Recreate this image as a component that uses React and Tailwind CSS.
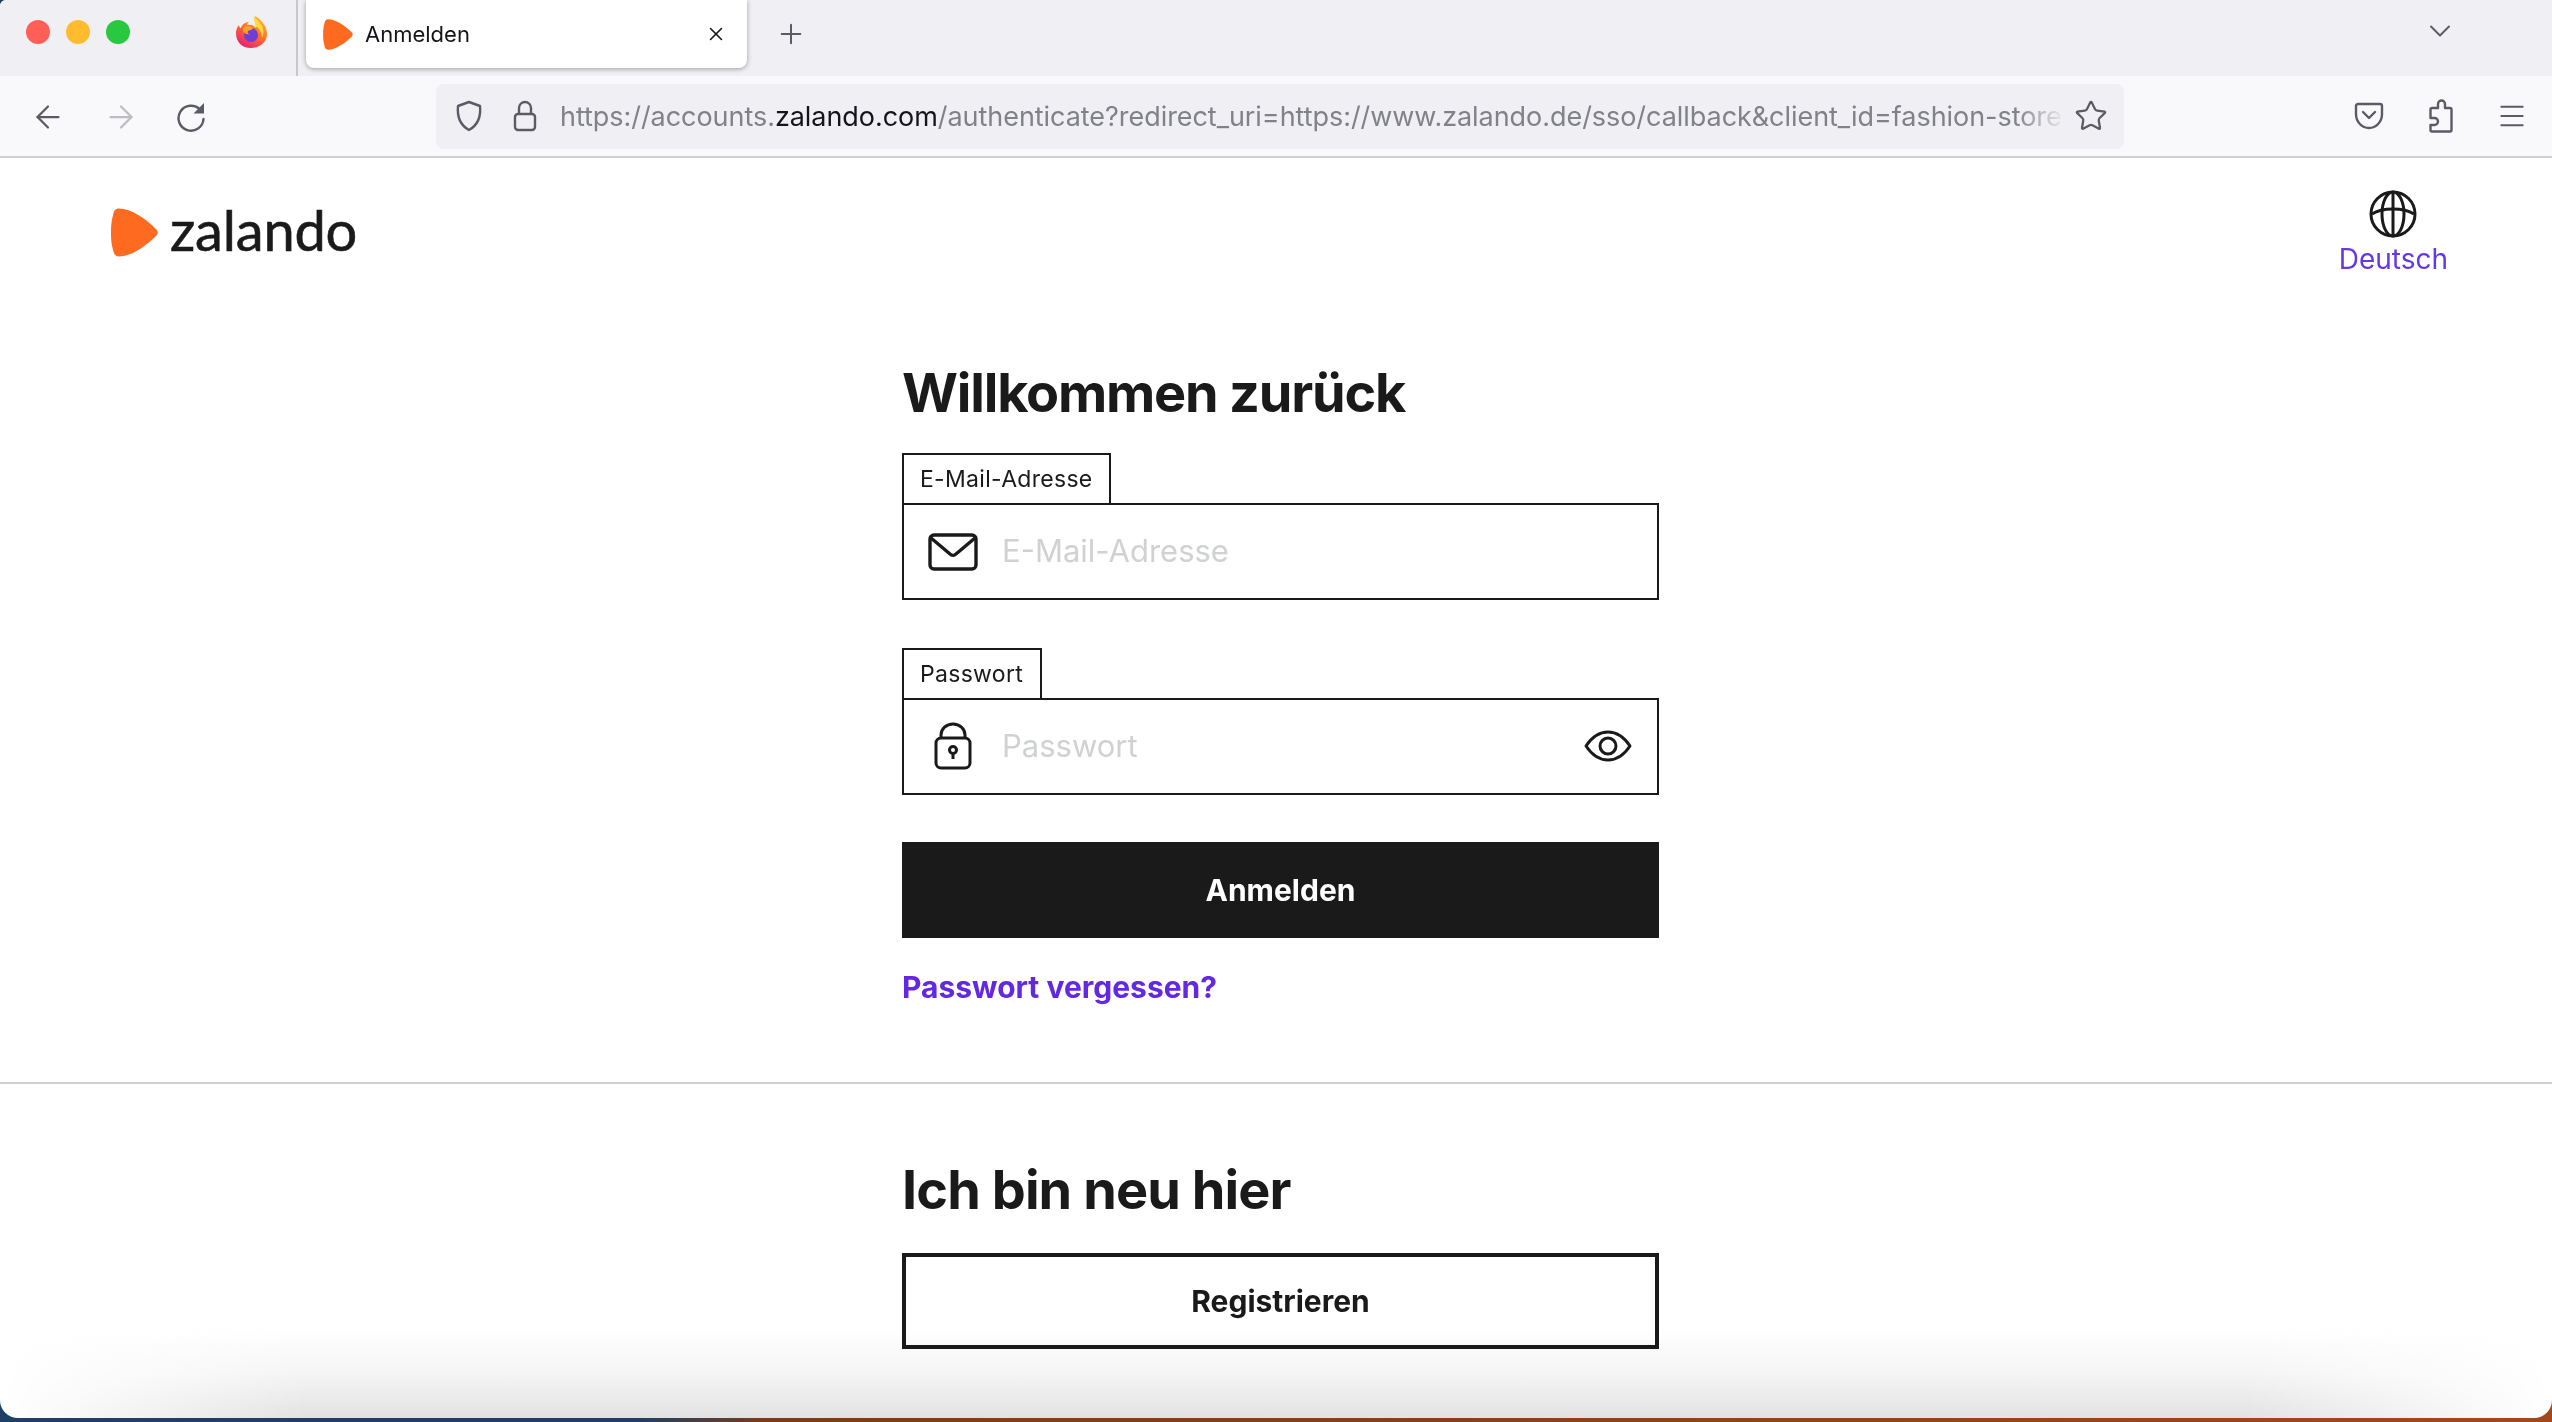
import { Plus, X, ChevronDown, ArrowLeft, ArrowRight, Star, Menu } from 'lucide-react';

const URL_HOST_BEFORE = 'https://accounts.';
const URL_HOST = 'zalando.com';
const URL_REST = '/authenticate?redirect_uri=https://www.zalando.de/sso/callback&client_id=fashion-store';

const ZalandoMark = ({ className }) => (
  <svg className={className} viewBox="0 0 47 49" fill="#ff6a21">
    <path d="M8 .5C20 .5 35 11 45 21c2.400 2.400 2.400 4.600 0 7C35 38 20 48.500 8 48.500c-3.500 0-5-2-5.800-6C.2 36 0 30 0 24.500S.2 13 2.200 6.500C3 2.500 4.500.5 8 .5z" />
  </svg>
);

const FirefoxIcon = () => (
  <svg className="w-[32px] h-[34px]" viewBox="0 0 32 34">
    <defs>
      <linearGradient id="ffBody" x1="0.8" y1="0" x2="0.2" y2="1">
        <stop offset="0" stopColor="#ffbd2e" />
        <stop offset="0.5" stopColor="#ff6a2b" />
        <stop offset="1" stopColor="#e5197d" />
      </linearGradient>
    </defs>
    <path d="M16 33C7 33 1 27 1 18c0-3 1-6 3-8 0 2 1 3 2 3 1-4 5-6 8-6-1 1-2 2-2 3 3-1 7 0 9 3 0-4-1-8-1-12 5 3 12 9 12 18 0 8-7 14-16 14z" fill="url(#ffBody)" />
    <path d="M18 1c4 3 9 8 10 13 1 3 0 6-1 9 0-6-3-10-7-12 0-3-1-7-2-10z" fill="#ffdc3e" />
    <circle cx="16" cy="20" r="7" fill="#6e3fd1" />
    <path d="M9 12c3-2 7-1 9 2l-5 2c-1 2 0 3 2 3-3 1-6-1-7-3 0-1 0-3 1-4z" fill="#ffa02b" />
  </svg>
);

const ReloadIcon = () => (
  <svg className="w-[30px] h-[32px]" viewBox="0 0 30 32" fill="none">
    <path d="M24 8.500A12.500 12.500 0 1 0 27.500 18" stroke="#5b5b66" strokeWidth="2.400" strokeLinecap="round" />
    <path d="M28 2v10.500H17.500z" fill="#5b5b66" />
  </svg>
);

const ChromeShield = () => (
  <svg className="w-[30px] h-[32px]" viewBox="0 0 30 32" fill="none" stroke="#5b5b66" strokeWidth="2.400" strokeLinejoin="round">
    <path d="M15 2 4 6c-1 10 2 19 11 24 9-5 12-14 11-24z" />
  </svg>
);

const ChromeLock = () => (
  <svg className="w-[26px] h-[32px]" viewBox="0 0 26 32" fill="none" stroke="#5b5b66" strokeWidth="2.400">
    <rect x="3" y="14" width="20" height="16" rx="3" />
    <path d="M7 14V8a6 6 0 0 1 12 0v6" />
  </svg>
);

const PocketIcon = () => (
  <svg className="w-[30px] h-[28px]" viewBox="0 0 30 28" fill="none" stroke="#5b5b66" strokeWidth="2.400" strokeLinejoin="round" strokeLinecap="round">
    <path d="M4 2h22a2 2 0 0 1 2 2v8c0 8-6 14-13 14S2 20 2 12V4a2 2 0 0 1 2-2z" />
    <path d="m9 10 6 6 6-6" />
  </svg>
);

const PuzzleIcon = () => (
  <svg className="w-[28px] h-[34px]" viewBox="0 0 28 34" fill="none" stroke="#5b5b66" strokeWidth="2.400" strokeLinejoin="round">
    <path d="M12 9V5a3.500 3.500 0 0 1 7 0v4h5a1.500 1.500 0 0 1 1.500 1.500V31a1.500 1.500 0 0 1-1.500 1.500H6A1.500 1.500 0 0 1 4.500 31v-5h4a3.500 3.500 0 0 0 0-7h-4v-8.500A1.500 1.500 0 0 1 6 9z" />
  </svg>
);

const MailIcon = () => (
  <svg className="w-[50px] h-[38px]" viewBox="0 0 50 38" fill="none" stroke="#1a1a1a" strokeWidth="3.400" strokeLinejoin="round" strokeLinecap="round">
    <rect x="2" y="2" width="46" height="34" rx="4" />
    <path d="m3 5 19 16a4 4 0 0 0 6 0L47 5" />
  </svg>
);

const PadlockIcon = () => (
  <svg className="w-[38px] h-[48px] -mt-[2px]" viewBox="0 0 38 48" fill="none" stroke="#1a1a1a" strokeWidth="3" strokeLinejoin="round">
    <rect x="2" y="16" width="34" height="30" rx="5" />
    <path d="M7 16v-3a12 11 0 0 1 24 0v3" />
    <circle cx="19" cy="28" r="3.500" />
    <path d="M19 31v6" />
  </svg>
);

const EyeIcon = () => (
  <svg className="w-[48px] h-[32px] mr-[25px] -mt-[2px] shrink-0" viewBox="0 0 48 32" fill="none" stroke="#1a1a1a" strokeWidth="3">
    <path d="M2 16C8 7 16 2 24 2s16 5 22 14c-6 9-14 14-22 14S8 25 2 16z" strokeLinejoin="round" />
    <circle cx="24" cy="16" r="8" />
  </svg>
);

const GlobeIcon = () => (
  <svg className="w-[48px] h-[48px]" viewBox="0 0 48 48" fill="none" stroke="#1a1a1a" strokeWidth="3">
    <circle cx="24" cy="24" r="22" />
    <ellipse cx="24" cy="24" rx="11" ry="22" />
    <path d="M24 2v44" />
    <path d="M3 24c6-4 14-5 21-5s15 1 21 5" />
  </svg>
);

const FieldTab = ({ label, width }) => (
  <div className={`${width} h-[52px] -mb-[2px] border-2 border-[#1a1a1a] flex items-center pl-[16px] text-[23px] tracking-[0.3px] text-[#1a1a1a]`}>
    {label}
  </div>
);

const LoginField = ({ label, tabWidth, icon, trailing }) => (
  <div>
    <FieldTab label={label} width={tabWidth} />
    <div className="h-[97px] border-2 border-[#1a1a1a] flex items-center">
      <div className="w-[98px] flex justify-center shrink-0">{icon}</div>
      <input
        placeholder={label}
        className="flex-1 min-w-0 outline-none text-[31px] text-[#1a1a1a] placeholder:text-[#d0d1d3]"
      />
      {trailing}
    </div>
  </div>
);

export default function App() {
  return (
    <div className="h-screen overflow-hidden bg-[linear-gradient(to_right,#1e3f66_0%,#1e3f66_25%,#7a3c18_30%,#a2481c_100%)] font-['Inter',sans-serif]">
      <div className="relative h-[1418px] flex flex-col overflow-hidden rounded-b-[18px] rounded-tl-[6px] bg-white">
        {/* Tab strip */}
        <div className="h-[76px] shrink-0 bg-[#f0f0f4] flex">
          <div className="w-[298px] shrink-0 flex items-start border-r-2 border-[#c8c8cc]">
            <div className="flex gap-[16px] pl-[26px] pt-[20px]">
              <span className="w-[24px] h-[24px] rounded-full bg-[#ff5f57]" />
              <span className="w-[24px] h-[24px] rounded-full bg-[#febc2e]" />
              <span className="w-[24px] h-[24px] rounded-full bg-[#28c840]" />
            </div>
            <div className="ml-[105px] pt-[15px]">
              <FirefoxIcon />
            </div>
          </div>
          <div className="ml-[8px] w-[441px] h-[68px] bg-white rounded-b-[8px] shadow-[0_1px_5px_rgba(0,0,0,0.35)] flex items-center pl-[17px] pr-[20px]">
            <ZalandoMark className="w-[30px] h-[31px] shrink-0" />
            <span className="ml-[12px] flex-1 text-[22px] text-[#15141a]">Anmelden</span>
            <X className="w-[22px] h-[22px] text-[#15141a]" strokeWidth={1.7} />
          </div>
          <div className="ml-[28px] h-[68px] flex items-center">
            <Plus className="w-[32px] h-[32px] text-[#5b5b66]" strokeWidth={1.500} />
          </div>
          <div className="ml-auto mr-[94px] h-[62px] flex items-center">
            <ChevronDown className="w-[36px] h-[36px] text-[#5b5b66]" strokeWidth={1.300} />
          </div>
        </div>

        {/* Toolbar */}
        <div className="h-[82px] shrink-0 bg-[#f9f9fb] border-b-2 border-[#cfcfd1] flex items-center">
          <div className="w-[436px] shrink-0 flex items-center pl-[30px] gap-[37px] pt-[2px]">
            <ArrowLeft className="w-[36px] h-[36px] text-[#5b5b66]" strokeWidth={1.500} />
            <ArrowRight className="w-[36px] h-[36px] text-[#bcbcc2]" strokeWidth={1.500} />
            <ReloadIcon />
          </div>
          <div className="w-[1688px] h-[65px] rounded-[8px] bg-[#f0f0f4] flex items-center pl-[18px] pr-[16px]">
            <ChromeShield />
            <div className="ml-[28px]"><ChromeLock /></div>
            <div className="ml-[22px] pt-[3px] flex-1 min-w-0 overflow-hidden whitespace-nowrap text-[27px] tracking-[-0.05px] text-[#81818a] [mask-image:linear-gradient(to_left,transparent_6px,black_56px)]">
              {URL_HOST_BEFORE}<span className="text-[#15141a]">{URL_HOST}</span>{URL_REST}
            </div>
            <Star className="ml-[2px] w-[34px] h-[34px] shrink-0 text-[#5b5b66]" strokeWidth={1.600} />
          </div>
          <div className="flex-1 flex items-center justify-end pr-[24px] gap-[42px]">
            <PocketIcon />
            <PuzzleIcon />
            <Menu className="w-[32px] h-[32px] text-[#5b5b66]" strokeWidth={1.500} />
          </div>
        </div>

        {/* Header */}
        <div className="h-[116px] shrink-0 flex items-start justify-between pl-[111px] pr-[104px]">
          <div className="flex items-center gap-[12px] pt-[50px]">
            <ZalandoMark className="w-[47px] h-[49px]" />
            <span className="-mt-[6px] text-[56px] leading-[49px] tracking-[-0.200px] text-[#1a1a1a] [-webkit-text-stroke:0.6px_#1a1a1a] font-['Lato',sans-serif]">zalando</span>
          </div>
          <div className="flex flex-col items-center pt-[32px]">
            <GlobeIcon />
            <span className="mt-[3px] text-[28px] leading-[36px] text-[#6638e4]">Deutsch</span>
          </div>
        </div>

        {/* Login */}
        <div className="w-[757px] ml-[902px] shrink-0 pt-[85px]">
          <h1 className="text-[54px] leading-[68px] font-bold tracking-[-1.200px] text-[#1a1a1a]">Willkommen zurück</h1>
          <div className="mt-[26px] flex flex-col gap-[48px]">
            <LoginField label="E-Mail-Adresse" tabWidth="w-[209px]" icon={<MailIcon />} />
            <LoginField label="Passwort" tabWidth="w-[140px]" icon={<PadlockIcon />} trailing={<EyeIcon />} />
          </div>
          <button type="button" className="mt-[47px] w-full h-[96px] bg-[#1a1a1a] text-white text-[30px] font-bold">
            Anmelden
          </button>
          <a className="block mt-[29px] text-[30px] leading-[40px] font-bold text-[#6328e0]">Passwort vergessen?</a>
        </div>

        <div className="mt-[75px] h-[2px] shrink-0 bg-[#d0d1d3]" />

        {/* Register */}
        <div className="w-[757px] ml-[902px] shrink-0 pt-[72px]">
          <h2 className="text-[54px] leading-[68px] font-bold tracking-[-0.900px] text-[#1a1a1a]">Ich bin neu hier</h2>
          <button type="button" className="mt-[29px] w-full h-[96px] border-4 border-[#1a1a1a] text-[#1a1a1a] text-[30px] font-bold">
            Registrieren
          </button>
        </div>

        {/* Dock shadow on the window's bottom edge */}
        <div className="absolute inset-x-0 bottom-0 h-[90px] pointer-events-none mix-blend-multiply bg-linear-to-t from-[#e2e2e2] via-[#f5f5f5] to-transparent [mask-image:linear-gradient(to_right,transparent,black_12%,black_88%,transparent)]" />
      </div>
    </div>
  );
}
